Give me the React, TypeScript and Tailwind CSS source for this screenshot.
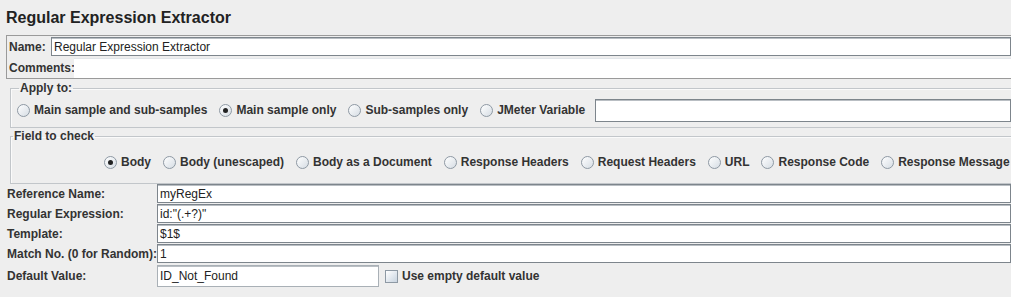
import React from "react";

const applyOptions = [
  { label: "Main sample and sub-samples", checked: false },
  { label: "Main sample only", checked: true },
  { label: "Sub-samples only", checked: false },
  { label: "JMeter Variable", checked: false },
];

const fieldOptions = [
  { label: "Body", checked: true },
  { label: "Body (unescaped)", checked: false },
  { label: "Body as a Document", checked: false },
  { label: "Response Headers", checked: false },
  { label: "Request Headers", checked: false },
  { label: "URL", checked: false },
  { label: "Response Code", checked: false },
  { label: "Response Message", checked: false },
];

const fieldRows = [
  { label: "Reference Name:", value: "myRegEx" },
  { label: "Regular Expression:", value: 'id:"(.+?)"' },
  { label: "Template:", value: "$1$" },
  { label: "Match No. (0 for Random):", value: "1" },
];

const Radio = ({ label, checked }: { label: string; checked: boolean }) => (
  <label className="flex items-center gap-[4px] whitespace-nowrap">
    <span className="flex h-[13px] w-[13px] items-center justify-center rounded-full border border-[#8e99a4] bg-gradient-to-br from-[#ffffff] to-[#d6dde4]">
      {checked && <span className="h-[5px] w-[5px] rounded-full bg-[#222]" />}
    </span>
    <span className="font-bold">{label}</span>
  </label>
);

const TextBox = ({ value, className = "" }: { value: string; className?: string }) => (
  <div
    className={`flex items-center border border-[#7d858c] bg-white px-[2px] font-normal text-[#222] shadow-[inset_0_1px_0_#b9bec3] ${className}`}
  >
    {value}
  </div>
);

const App = () => {
  return (
    <div className="h-[297px] w-[1011px] overflow-hidden bg-[#eeeeee] font-['Liberation_Sans',Arial,sans-serif] text-[12px] text-[#333]">
      <div className="h-[35px] pl-[6px] pt-[9px] text-[16px] font-bold leading-[18px] text-[#222]">
        Regular Expression Extractor
      </div>

      {/* Name / Comments */}
      <div className="ml-[6px] border border-r-0 border-[#9a9a9a]">
        <div className="flex h-[21px] items-center">
          <span className="w-[44px] pl-[2px] font-bold">Name:</span>
          <TextBox value="Regular Expression Extractor" className="h-[19px] flex-1" />
        </div>
        <div className="flex h-[21px] items-center">
          <span className="w-[67px] pl-[2px] font-bold">Comments:</span>
          <div className="h-[20px] flex-1 border-t border-[#e2e6ea] bg-white" />
        </div>
      </div>

      {/* Apply to */}
      <fieldset className="ml-[10px] mt-[2px] h-[47px] border border-r-0 border-[#c2c6ca] pl-[6px] shadow-[inset_1px_1px_0_#fafafa]">
        <legend className="ml-[2px] px-[1px] font-bold leading-[14px]">Apply to:</legend>
        <div className="mt-[3px] flex h-[24px] items-center gap-[12px]">
          {applyOptions.map((o) => (
            <Radio key={o.label} label={o.label} checked={o.checked} />
          ))}
          <TextBox value="" className="-ml-[2px] h-[23px] flex-1" />
        </div>
      </fieldset>

      {/* Field to check */}
      <fieldset className="ml-[10px] mt-[1px] h-[55px] border border-r-0 border-[#c2c6ca] shadow-[inset_1px_1px_0_#fafafa]">
        <legend className="ml-[2px] px-[1px] font-bold leading-[14px]">Field to check</legend>
        <div className="mt-[11px] flex h-[16px] items-center gap-[12px] pl-[93px]">
          {fieldOptions.map((o) => (
            <Radio key={o.label} label={o.label} checked={o.checked} />
          ))}
        </div>
      </fieldset>

      {/* Text rows */}
      <div className="flex flex-col gap-[1px]">
        {fieldRows.map((r) => (
          <div key={r.label} className="flex h-[19px] items-center">
            <span className="w-[157px] shrink-0 pl-[7px] font-bold">{r.label}</span>
            <TextBox value={r.value} className="h-[19px] flex-1" />
          </div>
        ))}
        <div className="mt-[1px] flex h-[22px] items-center">
          <span className="w-[157px] shrink-0 pl-[7px] font-bold">Default Value:</span>
          <TextBox value="ID_Not_Found" className="h-[22px] w-[222px] border-[#a9b0b6]" />
          <span className="ml-[6px] h-[13px] w-[13px] border border-[#8e99a4] bg-gradient-to-br from-[#ffffff] to-[#c9d4e0]" />
          <span className="ml-[4px] font-bold">Use empty default value</span>
        </div>
      </div>
    </div>
  );
};

export default App;
